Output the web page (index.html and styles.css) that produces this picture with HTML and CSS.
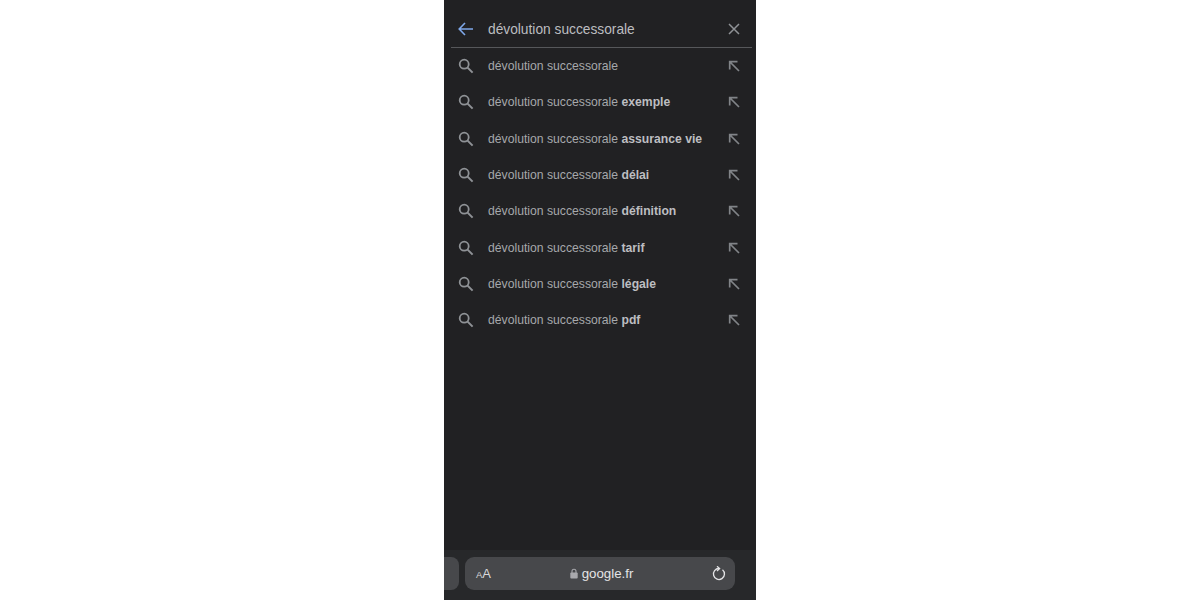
FILE: index.html
```html
<!DOCTYPE html>
<html lang="fr">
<head>
    <meta charset="UTF-8">
    <meta name="viewport" content="width=device-width, initial-scale=1.0">
    <title>dévolution successorale</title>
    <link rel="stylesheet" href="styles.css">
</head>
<body>
    <svg class="icon-defs" width="0" height="0">
        <symbol id="search" viewBox="0 0 16 16">
            <circle cx="6.2" cy="6.2" r="4.5" fill="none" stroke="currentColor" stroke-width="1.8"/>
            <path d="M9.6 9.6 L14.6 14.6" fill="none" stroke="currentColor" stroke-width="2"/>
        </symbol>
        <symbol id="fill-in" viewBox="0 0 12 12">
            <path d="M1.7 9.5 V1.7 H9.5 M2 2 L11 11" fill="none" stroke="currentColor" stroke-width="1.7"/>
        </symbol>
    </svg>
    <div class="phone">
        <header class="search-bar">
            <svg class="back" width="16" height="14" viewBox="0 0 16 14">
                <path d="M7 1 L1.2 7 L7 13 M1.2 7 H15" fill="none" stroke="currentColor" stroke-width="1.6"/>
            </svg>
            <span class="query">dévolution successorale</span>
            <svg class="clear" width="12" height="12" viewBox="0 0 12 12">
                <path d="M1 1 L11 11 M11 1 L1 11" fill="none" stroke="currentColor" stroke-width="1.5"/>
            </svg>
        </header>
        <ul class="suggestions">
            <li class="row">
                <svg class="row-search"><use href="#search"/></svg>
                <span class="label">dévolution successorale</span>
                <svg class="row-fill"><use href="#fill-in"/></svg>
            </li>
            <li class="row">
                <svg class="row-search"><use href="#search"/></svg>
                <span class="label">dévolution successorale <b>exemple</b></span>
                <svg class="row-fill"><use href="#fill-in"/></svg>
            </li>
            <li class="row">
                <svg class="row-search"><use href="#search"/></svg>
                <span class="label">dévolution successorale <b>assurance vie</b></span>
                <svg class="row-fill"><use href="#fill-in"/></svg>
            </li>
            <li class="row">
                <svg class="row-search"><use href="#search"/></svg>
                <span class="label">dévolution successorale <b>délai</b></span>
                <svg class="row-fill"><use href="#fill-in"/></svg>
            </li>
            <li class="row">
                <svg class="row-search"><use href="#search"/></svg>
                <span class="label">dévolution successorale <b>définition</b></span>
                <svg class="row-fill"><use href="#fill-in"/></svg>
            </li>
            <li class="row">
                <svg class="row-search"><use href="#search"/></svg>
                <span class="label">dévolution successorale <b>tarif</b></span>
                <svg class="row-fill"><use href="#fill-in"/></svg>
            </li>
            <li class="row">
                <svg class="row-search"><use href="#search"/></svg>
                <span class="label">dévolution successorale <b>légale</b></span>
                <svg class="row-fill"><use href="#fill-in"/></svg>
            </li>
            <li class="row">
                <svg class="row-search"><use href="#search"/></svg>
                <span class="label">dévolution successorale <b>pdf</b></span>
                <svg class="row-fill"><use href="#fill-in"/></svg>
            </li>
        </ul>
        <footer class="browser-bar">
            <div class="tab-stub"></div>
            <div class="address">
                <span class="text-size"><small>A</small>A</span>
                <span class="site">
                    <svg class="lock" width="8" height="11" viewBox="0 0 8 11">
                        <path d="M2 5 V3.2 a2 2 0 0 1 4 0 V5" fill="none" stroke="currentColor" stroke-width="1.1"/>
                        <rect x="0.3" y="4.6" width="7.4" height="6" rx="1" fill="currentColor"/>
                    </svg>
                    google.fr
                </span>
                <svg class="reload" width="14" height="15" viewBox="0 0 14 15">
                    <path d="M7 2.5 A5.5 5.5 0 1 0 10.5 3.8" fill="none" stroke="currentColor" stroke-width="1.3"/>
                    <path d="M5 0.3 L7.6 2.5 L5 4.9" fill="none" stroke="currentColor" stroke-width="1.3"/>
                </svg>
            </div>
        </footer>
    </div>
</body>
</html>
```

FILE: styles.css
```css
body {
    margin: 0;
    height: 600px;
    background: #ffffff;
    display: flex;
    justify-content: center;
    font-family: 'Liberation Sans', Arial, sans-serif;
    overflow: hidden;
}

.icon-defs {
    position: absolute;
}

.phone {
    width: 312px;
    height: 600px;
    background: #212123;
    display: flex;
    flex-direction: column;
}

.search-bar {
    height: 37px;
    margin: 0 4px 0 7px;
    padding: 10px 12px 0 7px;
    border-bottom: 1px solid #56575a;
    display: flex;
    align-items: center;
}

.back {
    color: #7fa8ea;
    margin-right: 15px;
}

.query {
    flex-grow: 1;
    font-size: 13.75px;
    margin-left: -1px;
    padding-top: 2px;
    color: #bcbdc0;
}

.clear {
    color: #8f9296;
}

.suggestions {
    list-style: none;
    margin: 0;
    padding: 0;
}

.row {
    height: 36.3px;
    padding: 0 16px 0 14px;
    display: flex;
    align-items: center;
}

.row-search {
    width: 16px;
    height: 16px;
    color: #8f9296;
    margin-right: 14px;
}

.label {
    flex-grow: 1;
    font-size: 12.2px;
    color: #a6a8ab;
}

.label b {
    color: #bdbec1;
}

.row-fill {
    width: 12px;
    height: 12px;
    color: #818488;
}

.browser-bar {
    margin-top: auto;
    height: 50px;
    background: #27282a;
    display: flex;
    gap: 6.5px;
    padding-top: 7px;
    box-sizing: border-box;
}

.tab-stub {
    width: 14.5px;
    height: 33px;
    background: #47484b;
    border-radius: 0 8px 8px 0;
}

.address {
    width: 270px;
    height: 33px;
    background: #47484b;
    border-radius: 9px;
    padding: 0 9px 0 11px;
    box-sizing: border-box;
    display: flex;
    align-items: center;
    justify-content: space-between;
    color: #e4e4e6;
}

.text-size {
    font-size: 13px;
    color: #d8d8da;
}

.text-size small {
    font-size: 9.5px;
}

.site {
    font-size: 13.3px;
    display: flex;
    align-items: center;
    gap: 4px;
}

.lock {
    color: #a9a9ad;
}
```
